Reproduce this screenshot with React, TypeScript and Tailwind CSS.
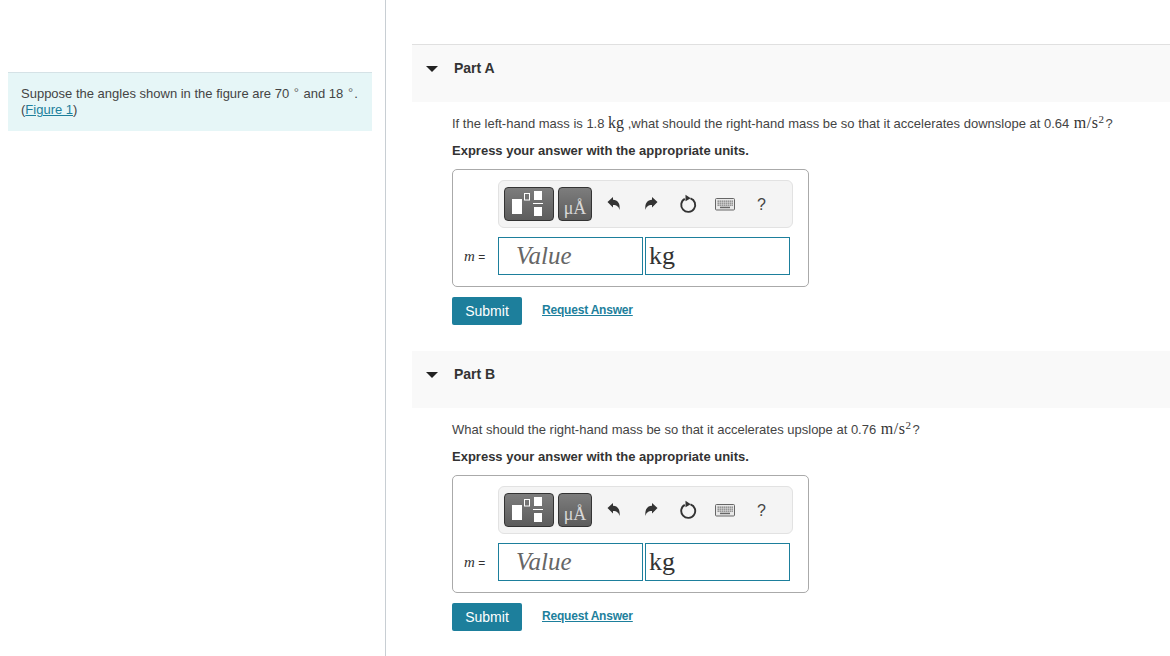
const sans = "font-['Liberation_Sans',Arial,sans-serif]";
const serif = "font-['Liberation_Serif','Times_New_Roman',serif]";

function TemplatesIcon() {
  return (
    <svg width="50" height="34" viewBox="0 0 50 34" className="block shrink-0">
      <rect x="8" y="12" width="10" height="15" fill="#fff" />
      <rect x="20.500" y="6.500" width="5" height="6.500" fill="none" stroke="#fff" strokeWidth="1" />
      <rect x="30" y="4" width="8" height="9" fill="#fff" />
      <rect x="29" y="16" width="10" height="1" fill="#fff" />
      <rect x="30" y="20" width="8" height="9" fill="#fff" />
    </svg>
  );
}

function Undo() {
  return (
    <svg width="16" height="16" viewBox="0 0 16 16" className="block">
      <path d="M1.500 6 L7 1 V3.800 C11.500 3.800 14.500 7.500 13.500 14 C13 11 11 9 7 9 V11.500 Z" fill="#333" />
    </svg>
  );
}

function Redo() {
  return (
    <svg width="16" height="16" viewBox="0 0 16 16" className="block">
      <path d="M14.500 6 L9 1 V3.800 C4.500 3.800 1.500 7.500 2.500 14 C3 11 5 9 9 9 V11.500 Z" fill="#333" />
    </svg>
  );
}

function Reset() {
  return (
    <svg width="18" height="20" viewBox="0 0 18 20" className="block">
      <path d="M5.800 4.800 A7 7 0 1 0 11.500 4.300" fill="none" stroke="#333" strokeWidth="1.900" />
      <path d="M6.500 0.800 L11.800 4.300 L6.500 7.200 Z" fill="#333" />
    </svg>
  );
}

function Keyboard() {
  const keys = [];
  for (let y = 0; y < 3; y++) {
    for (let x = 0; x < 8; x++) {
      keys.push(<rect key={`${x}-${y}`} x={2.500 + x * 2} y={2.500 + y * 2} width="1.400" height="1.300" fill="#777" />);
    }
  }
  return (
    <svg width="20" height="13" viewBox="0 0 20 13" className="block">
      <rect x="0.500" y="0.500" width="19" height="11.500" rx="1" fill="#e8e8e8" stroke="#666" />
      {keys}
      <rect x="5" y="8.700" width="10" height="1.500" fill="#666" />
    </svg>
  );
}

function AnswerBox() {
  return (
    <div className="w-[357px] h-[118px] border border-[#aaaaaa] rounded-[5px] bg-white pt-[10px] pl-[45px] box-border">
      <div className="w-[295px] h-[48px] rounded-[6px] border border-[#e2e2e2] bg-[#f4f4f4] flex items-center pl-[5px] box-border">
        <div className="w-[50px] h-[34px] rounded-[4px] border border-[#333] bg-gradient-to-b from-[#7d7d7d] to-[#5c5c5c] box-border overflow-hidden flex items-center justify-center">
          <TemplatesIcon />
        </div>
        <div className={`ml-[4px] w-[34px] h-[34px] rounded-[4px] border border-[#333] bg-gradient-to-b from-[#7d7d7d] to-[#5c5c5c] box-border flex items-end justify-center pb-[3px] text-[#d8d8d8] text-[18px] leading-none ${serif}`}>
          μÅ
        </div>
        <div className="ml-[14px]"><Undo /></div>
        <div className="ml-[21px]"><Redo /></div>
        <div className="ml-[20px]"><Reset /></div>
        <div className="ml-[18px]"><Keyboard /></div>
        <div className={`ml-[22px] mt-[1px] text-[16px] text-[#444] ${sans}`}>?</div>
      </div>
      <div className="flex items-center mt-[9px] -ml-[34px]">
        <div className={`w-[34px] text-[#333] text-[12px] whitespace-nowrap ${sans}`}>
          <span className={`italic text-[15px] ${serif}`}>m</span> =
        </div>
        <div className={`w-[145px] h-[38px] border border-[#1d7f9c] box-border pl-[17px] flex items-center italic text-[25px] text-[#666] ${serif}`}>
          Value
        </div>
        <div className={`ml-[2px] w-[145px] h-[38px] border border-[#1d7f9c] box-border pl-[3px] pb-[1px] flex items-center text-[26px] text-[#333] ${serif}`}>
          kg
        </div>
      </div>
    </div>
  );
}

function Part({ title, headerClass, children }: { title: string; headerClass: string; children: React.ReactNode }) {
  return (
    <section>
      <div className={`${headerClass} bg-[#f9f9f9] flex items-start`}>
        <svg width="12" height="6" viewBox="0 0 12 6" className="ml-[14px] mt-[21px]">
          <path d="M0 0 H12 L6 6 Z" fill="#222" />
        </svg>
        <span className="ml-[16px] mt-[14px] text-[14px] leading-[18px] font-bold text-[#333]">{title}</span>
      </div>
      <div className="pl-[40px]">
        {children}
        <p className="mt-[9px] text-[13px] leading-[18px] font-bold text-[#333]">Express your answer with the appropriate units.</p>
        <div className="mt-[9px]"><AnswerBox /></div>
        <div className="mt-[10px] flex items-start">
          <button className="w-[70px] h-[28px] rounded-[2px] bg-[#1d7f9c] text-white text-[14px] flex items-center justify-center">Submit</button>
          <a className="ml-[20px] mt-[6px] text-[12px] tracking-[-0.2px] leading-[14px] font-bold text-[#1d7f9c] underline">Request Answer</a>
        </div>
      </div>
    </section>
  );
}

const Unit = ({ children }: { children: React.ReactNode }) => (
  <span className={`text-[16px] text-[#333] ${serif}`}>{children}</span>
);

const Speed = () => (
  <span className={`ml-[1px] mr-[1px] text-[16px] tracking-[0.5px] text-[#333] ${serif}`}>
    m/s<sup className="text-[11px]">2</sup>
  </span>
);

const Deg = () => <sup className="mx-[1px] text-[13px] leading-none text-[#666] relative -top-[1px]">°</sup>;

export default function App() {
  return (
    <div className={`w-[1170px] h-[656px] overflow-hidden bg-white flex ${sans}`}>
      <aside className="w-[386px] shrink-0 border-r border-[#c8ced3] pt-[72px] pl-[8px] box-border">
        <div className="w-[364px] h-[59px] bg-[#e6f6f7] border-t border-[#d5e2e6] pl-[13px] pt-[13px] box-border text-[13px] leading-[16px] text-[#444]">
          Suppose the angles shown in the figure are 70 <Deg /> and 18 <Deg />.
          <br />(<a className="text-[#1d7f9c] underline">Figure 1</a>)
        </div>
      </aside>
      <main className="flex-1 pl-[26px] pt-[44px] min-w-0">
        <Part title="Part A" headerClass="h-[58px] border-t border-[#e0e0e0] box-border">
          <p className="mt-[12px] text-[13px] leading-[18px] text-[#444] whitespace-nowrap">
            If the left-hand mass is 1.8 <Unit>kg</Unit> ,what should the right-hand mass be so that it accelerates downslope at 0.64 <Speed />?
          </p>
        </Part>
        <div className="h-[26px]" />
        <Part title="Part B" headerClass="h-[57px]">
          <p className="mt-[12px] text-[13px] leading-[18px] text-[#444] whitespace-nowrap">
            What should the right-hand mass be so that it accelerates upslope at 0.76 <Speed />?
          </p>
        </Part>
      </main>
    </div>
  );
}
